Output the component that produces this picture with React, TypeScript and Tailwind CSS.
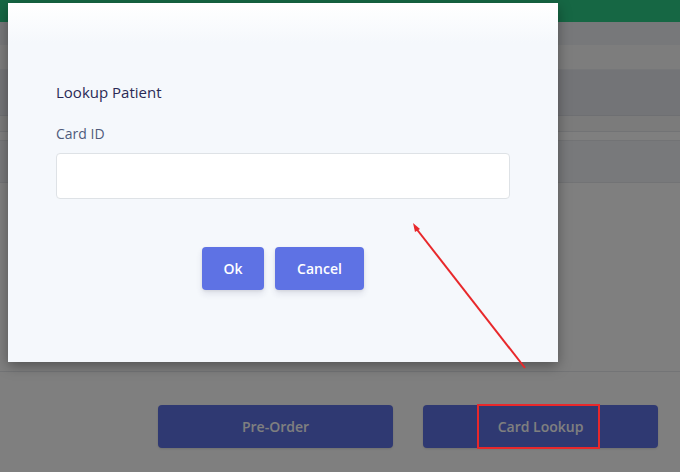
const App = () => {
  return (
    <div className="relative w-[680px] h-[472px] overflow-hidden bg-white font-['Open_Sans',sans-serif]">
      {/* page under the modal */}
      <div className="h-[22px] bg-[#2dce89]" />
      <div className="h-[23px] bg-[#eef0f5]" />
      <div className="h-[25px] bg-[#fafafa] border-b border-[#eceef2]" />
      <div className="h-[46px] bg-[#e6e8ee] border-b border-[#dcdfe5]" />
      <div className="h-[16px] bg-[#f6f6f7] border-b border-[#e4e6ea]" />
      <div className="h-[9px] bg-white border-b border-[#e4e6ea]" />
      <div className="h-[42px] bg-[#f0f2f6] border-b border-[#e4e6ea]" />
      <div className="h-[189px] bg-white border-b border-[#e6e8ec]" />
      <div className="flex justify-end gap-[30px] pr-[22px] pt-[33px]">
        <button className="w-[235px] h-[43px] rounded bg-[#5e72e4] text-white text-sm font-semibold shadow">
          Pre-Order
        </button>
        <button className="w-[235px] h-[43px] rounded bg-[#5e72e4] text-white text-sm font-semibold shadow">
          Card Lookup
        </button>
      </div>

      {/* backdrop */}
      <div className="absolute inset-0 bg-black/50" />

      {/* modal */}
      <div className="absolute left-[8px] top-[3px] w-[550px] h-[359px] bg-[linear-gradient(to_bottom,#ffffff,#f5f8fc_40px)] shadow-[0_4px_12px_rgba(0,0,0,0.35)] px-[48px] pt-[79px]">
        <h5 className="text-[15px] leading-5 font-medium text-[#2a2a55]">Lookup Patient</h5>
        <label className="block mt-[22px] text-sm leading-5 text-[#4f5b7b]">Card ID</label>
        <input className="block mt-[9px] w-[454px] h-[46px] rounded bg-white border border-[#dee2e6] outline-none" />
        <div className="flex justify-center gap-[11px] mt-[48px]">
          <button className="w-[62px] h-[43px] rounded bg-[#5e72e4] text-white text-sm font-semibold shadow-[0_4px_6px_rgba(50,50,93,0.11),0_1px_3px_rgba(0,0,0,0.08)]">
            Ok
          </button>
          <button className="w-[89px] h-[43px] rounded bg-[#5e72e4] text-white text-sm font-semibold shadow-[0_4px_6px_rgba(50,50,93,0.11),0_1px_3px_rgba(0,0,0,0.08)]">
            Cancel
          </button>
        </div>
      </div>

      {/* annotation */}
      <svg className="absolute inset-0 pointer-events-none" width="680" height="472">
        <line x1="525" y1="368" x2="415" y2="227" stroke="#e8282b" strokeWidth="2" />
        <polygon points="413,223 420,229 415,232" fill="#e8282b" />
      </svg>
      <div className="absolute left-[477px] top-[404px] w-[123px] h-[45px] border-2 border-[#e8282b]" />
    </div>
  );
};

export default App;
